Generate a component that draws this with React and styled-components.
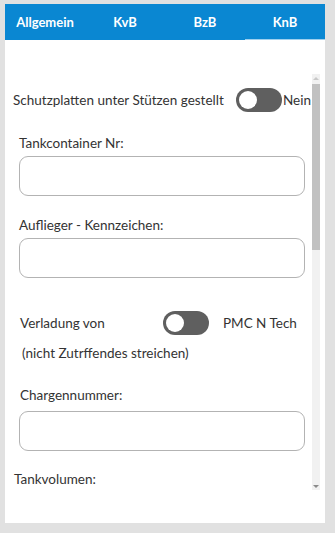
import React, { useState } from 'react';
import styled, { createGlobalStyle } from 'styled-components';

const GlobalStyle = createGlobalStyle`
  html, body {
    margin: 0;
    padding: 0;
    background: #e1e1e1;
    font-family: Lato, "Open Sans", sans-serif;
    color: #333;
  }
  * {
    box-sizing: border-box;
  }
`;

const tabs = ['Allgemein', 'KvB', 'BzB', 'KnB'];

const App = () => {
  const [activeTab, setActiveTab] = useState(3);
  const [schutz, setSchutz] = useState(false);
  const [verladung, setVerladung] = useState(false);

  return (
    <>
      <GlobalStyle />
      <Card>
        <TabBar>
          {tabs.map((t, i) => (
            <Tab key={t} active={i === activeTab} onClick={() => setActiveTab(i)}>
              {t}
            </Tab>
          ))}
        </TabBar>
        <ScrollArea>
          <Content>
            <ToggleRow labelWidth={223} indent={8} top={16}>
              <span>Schutzplatten unter Stützen gestellt</span>
              <Toggle checked={schutz} onClick={() => setSchutz(!schutz)}>
                <Knob checked={schutz} />
              </Toggle>
              <ToggleText gap={1}>Nein</ToggleText>
            </ToggleRow>

            <Label indent={14} top={23}>Tankcontainer Nr:</Label>
            <Input top={5} />

            <Label indent={14} top={21}>Auflieger - Kennzeichen:</Label>
            <Input top={5} />

            <ToggleRow labelWidth={143} indent={15} top={33}>
              <span>Verladung von</span>
              <Toggle checked={verladung} onClick={() => setVerladung(!verladung)}>
                <Knob checked={verladung} />
              </Toggle>
              <ToggleText gap={14}>PMC N Tech</ToggleText>
            </ToggleRow>
            <Hint>(nicht Zutrffendes streichen)</Hint>

            <Label indent={15} top={26}>Chargennummer:</Label>
            <Input top={8} />

            <Label indent={9} top={20}>Tankvolumen:</Label>
            <Input top={6} />
          </Content>
          <ScrollTrack>
            <ScrollButton up />
            <ScrollThumb />
            <TrackFill />
            <ScrollButton />
          </ScrollTrack>
        </ScrollArea>
      </Card>
    </>
  );
};

const Card = styled.div`
  width: 320px;
  height: 519px;
  margin: 4px 0 0 5px;
  background: #fff;
`;

const TabBar = styled.div`
  display: grid;
  grid-template-columns: repeat(4, 1fr);
  height: 36px;
  background: #0a87d2;
  margin-bottom: 32px;
`;

const Tab = styled.div`
  display: flex;
  align-items: center;
  justify-content: center;
  color: #fff;
  font-weight: 700;
  font-size: 13px;
  cursor: pointer;
  border-bottom: 1px solid ${props => (props.active ? '#9fd0ee' : 'transparent')};
  padding-top: 1px;
`;

const ScrollArea = styled.div`
  display: flex;
  height: 420px;
  margin-right: 5px;
  font-size: 13.5px;
`;

const Content = styled.div`
  flex: 1;
  min-width: 0;
  overflow: hidden;
`;

const ScrollTrack = styled.div`
  width: 8px;
  display: flex;
  flex-direction: column;
  align-items: stretch;
  background: #f1f1f1;
  margin-top: 2px;
  margin-bottom: 2px;
`;

const ScrollButton = styled.div`
  height: 8px;
  display: flex;
  align-items: center;
  justify-content: center;
  &::before {
    content: '';
    width: 0;
    height: 0;
    border-left: 3px solid transparent;
    border-right: 3px solid transparent;
    ${props =>
      props.up
        ? 'border-bottom: 3px solid #c8c8c8;'
        : 'border-top: 3px solid #8a8a8a;'}
  }
`;

const ScrollThumb = styled.div`
  height: 166px;
  margin-top: 2px;
  background: #c1c1c1;
`;

const TrackFill = styled.div`
  flex: 1;
`;

const ToggleRow = styled.div`
  display: grid;
  grid-template-columns: ${props => props.labelWidth}px auto 1fr;
  align-items: center;
  padding-left: ${props => props.indent}px;
  margin-top: ${props => props.top}px;
  white-space: nowrap;
  overflow: hidden;
`;

const Toggle = styled.div`
  width: 46px;
  height: 24px;
  border-radius: 12px;
  background: ${props => (props.checked ? '#0a87d2' : '#5f5f5f')};
  position: relative;
  cursor: pointer;
`;

const Knob = styled.span`
  position: absolute;
  top: 3px;
  left: ${props => (props.checked ? '25px' : '3px')};
  width: 18px;
  height: 18px;
  border-radius: 50%;
  background: #fff;
  transition: left 0.2s;
`;

const ToggleText = styled.span`
  margin-left: ${props => props.gap}px;
`;

const Label = styled.div`
  padding-left: ${props => props.indent}px;
  margin-top: ${props => props.top}px;
  line-height: 16px;
  color: #333;
`;

const Input = styled.input`
  display: block;
  width: 286px;
  height: 40px;
  margin: ${props => props.top}px 0 0 14px;
  border: 1px solid #b3b3b3;
  border-radius: 9px;
  font-family: inherit;
  font-size: 13px;
  padding: 0 10px;
  outline: none;
`;

const Hint = styled.div`
  padding-left: 17px;
  margin-top: 10px;
  line-height: 16px;
`;

export default App;
